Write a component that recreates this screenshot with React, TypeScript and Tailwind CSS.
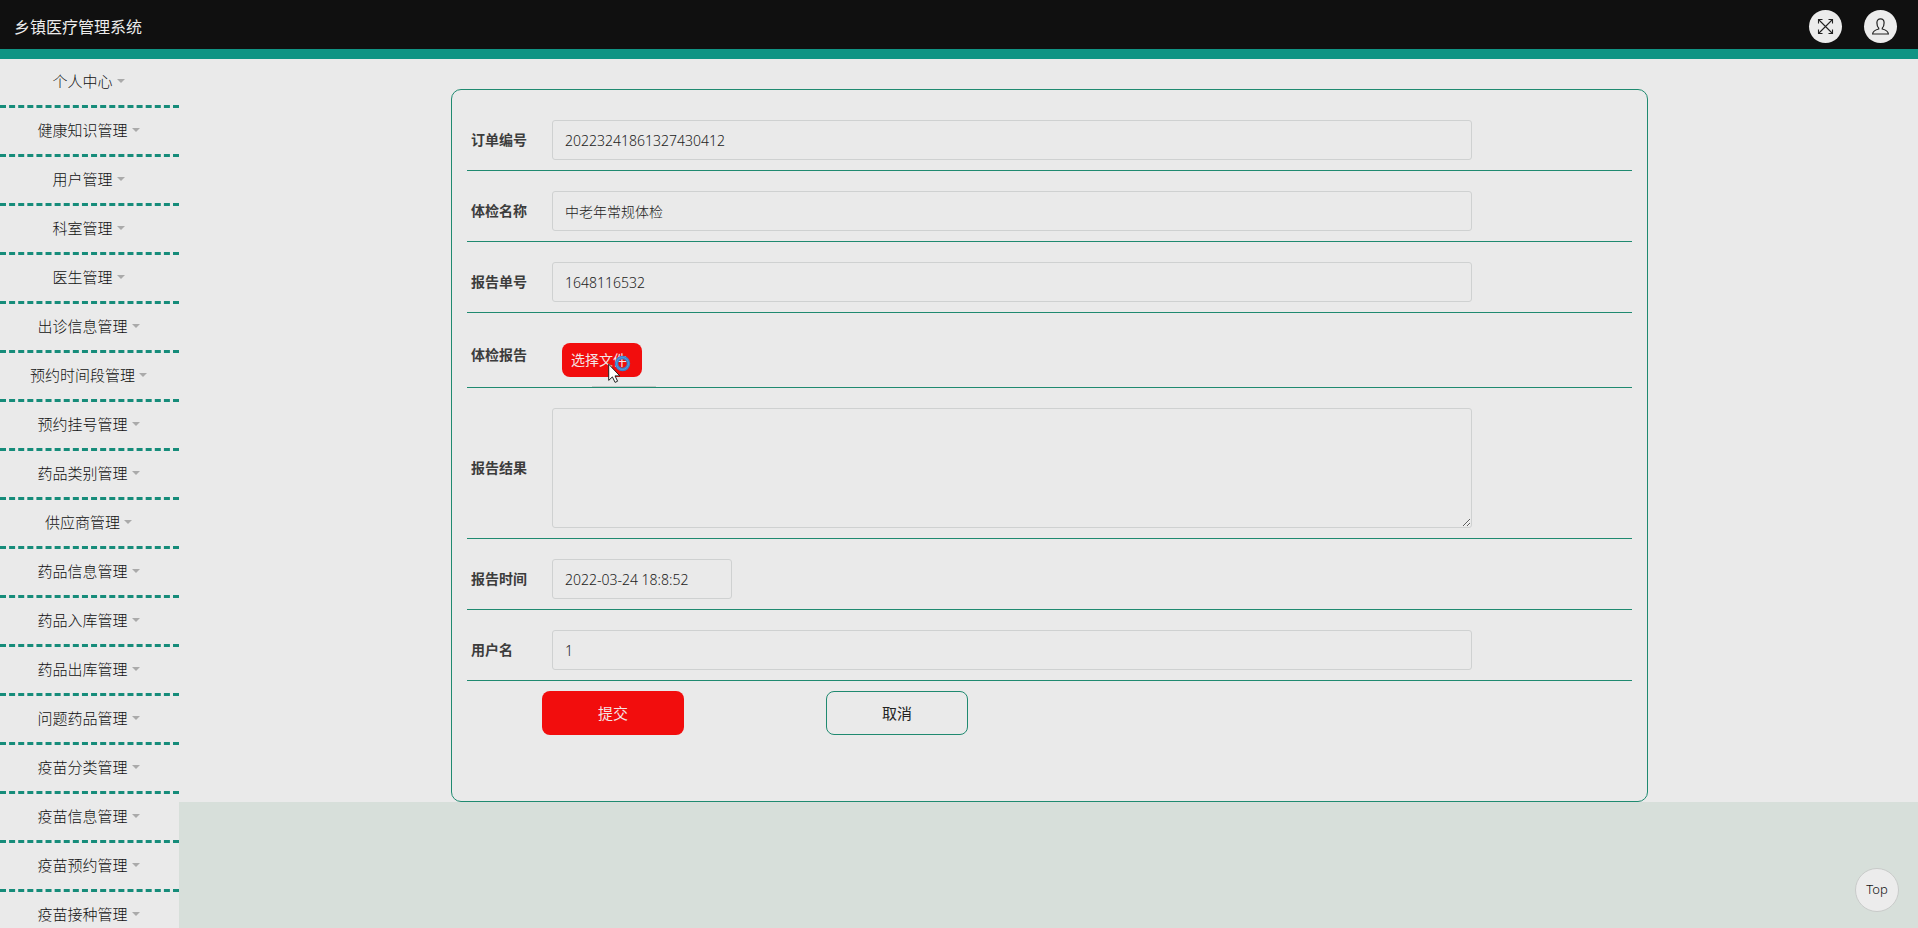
import { useState, type ReactNode } from "react";

const menus = [
  "个人中心",
  "健康知识管理",
  "用户管理",
  "科室管理",
  "医生管理",
  "出诊信息管理",
  "预约时间段管理",
  "预约挂号管理",
  "药品类别管理",
  "供应商管理",
  "药品信息管理",
  "药品入库管理",
  "药品出库管理",
  "问题药品管理",
  "疫苗分类管理",
  "疫苗信息管理",
  "疫苗预约管理",
  "疫苗接种管理",
];

const inputClass =
  "h-10 rounded-[3px] border border-[#cfd1d1] bg-transparent px-3 text-sm font-light text-[#222] outline-none";

function Row({ id, label, children }: { id: string; label: string; children: ReactNode }) {
  return (
    <div className="flex items-center border-b border-[#1f8a70] pt-5 pb-2.5 pl-1">
      <label htmlFor={id} className="mr-px w-20 shrink-0 text-sm font-bold text-[#3c3c3c]">
        {label}
      </label>
      {children}
    </div>
  );
}

function FullscreenIcon() {
  return (
    <svg width="17" height="17" viewBox="0 0 17 17" fill="none" stroke="#222" strokeWidth="1.1">
      <path d="M1.5 1.5l14 14M15.5 1.5l-14 14" />
      <path d="M1.5 5.5v-4h4M11.5 1.5h4v4M15.5 11.5v4h-4M5.5 15.5h-4v-4" />
    </svg>
  );
}

function UserIcon() {
  return (
    <svg width="17" height="17" viewBox="0 0 17 17" fill="none" stroke="#222" strokeWidth="1.2">
      <path d="M6.7 10.2C5.5 9 4.9 7 4.9 4.8 4.9 2.2 6.3.8 8.5.8s3.600 1.400 3.600 4c0 2.200-.6 4.200-1.800 5.400v.8c2.800.7 5.800 1.600 6.100 5H.6c.3-3.400 3.300-4.300 6.100-5z" />
    </svg>
  );
}

function BusyCursor() {
  return (
    <svg
      className="pointer-events-none absolute top-3 left-[46px]"
      width="24"
      height="28"
      viewBox="0 0 24 28"
    >
      <circle cx="14.5" cy="8.5" r="6" fill="none" stroke="#3a80cc" strokeWidth="3.4" />
      <circle cx="14.5" cy="8.5" r="6" fill="none" stroke="#5a9ddb" strokeWidth="1" />
      <path
        d="M.7 9.2v16.200l3.700-3.500 2.700 5.500 2.500-1.200-2.600-5.300h4.800z"
        fill="#fff"
        stroke="#222"
        strokeWidth="1"
      />
    </svg>
  );
}

export default function App() {
  const [form, setForm] = useState({
    orderNo: "20223241861327430412",
    name: "中老年常规体检",
    reportNo: "1648116532",
    result: "",
    time: "2022-03-24 18:8:52",
    username: "1",
  });

  const update = (key: keyof typeof form, value: string) =>
    setForm((prev) => ({ ...prev, [key]: value }));

  return (
    <div className="flex h-screen flex-col overflow-hidden bg-[#d7dfda] font-['Noto_Sans','Noto_Sans_CJK_SC',sans-serif]">
      <header className="flex h-[59px] shrink-0 items-center justify-between border-b-10 border-[#0f9484] bg-[#101010] pr-[21px] pl-3.5">
        <h1 className="pt-1 text-base text-[#ececec]">乡镇医疗管理系统</h1>
        <div className="flex gap-[22px] pt-[3px]">
          <button
            type="button"
            aria-label="全屏"
            className="flex h-[33px] w-[33px] items-center justify-center rounded-full bg-[#ececec]"
          >
            <FullscreenIcon />
          </button>
          <button
            type="button"
            aria-label="用户"
            className="flex h-[33px] w-[33px] items-center justify-center rounded-full bg-[#ececec]"
          >
            <UserIcon />
          </button>
        </div>
      </header>

      <div className="flex min-h-0 flex-1">
        <nav className="w-[179px] shrink-0 bg-[#eaeaea]">
          <ul>
            {menus.map((menu) => (
              <li key={menu} className="border-b-3 border-dashed border-[#168c7a]">
                <a
                  href="#"
                  className="flex h-[46px] items-center justify-center gap-1 pr-0.5 pb-px text-[15px] font-light text-[#111]"
                >
                  {menu}
                  <span className="mb-0.5 border-x-4 border-t-4 border-x-transparent border-t-[#aaa]" />
                </a>
              </li>
            ))}
          </ul>
        </nav>

        <main className="min-w-0 flex-1">
          <div className="bg-[#eaeaea] pt-[30px]">
            <form
              className="mr-[270px] ml-[272px] rounded-[10px] border border-[#1f8a70] px-[15px] pt-2.5 pb-[66px]"
              onSubmit={(e) => e.preventDefault()}
            >
              <Row id="orderNo" label="订单编号">
                <input
                  id="orderNo"
                  className={`${inputClass} w-[920px]`}
                  value={form.orderNo}
                  onChange={(e) => update("orderNo", e.target.value)}
                />
              </Row>
              <Row id="name" label="体检名称">
                <input
                  id="name"
                  className={`${inputClass} w-[920px]`}
                  value={form.name}
                  onChange={(e) => update("name", e.target.value)}
                />
              </Row>
              <Row id="reportNo" label="报告单号">
                <input
                  id="reportNo"
                  className={`${inputClass} w-[920px]`}
                  value={form.reportNo}
                  onChange={(e) => update("reportNo", e.target.value)}
                />
              </Row>
              <Row id="report" label="体检报告">
                <div className="relative mt-2.5 ml-2.5">
                  <button
                    id="report"
                    type="button"
                    className="block h-[34px] w-20 rounded-lg bg-[#f20d0d] px-[9px] text-left text-sm text-[#f3e6e6]"
                  >
                    选择文件
                  </button>
                  <BusyCursor />
                  <span className="absolute top-[43px] left-[30px] h-px w-16 bg-[#c4c8c6]" />
                </div>
              </Row>
              <Row id="result" label="报告结果">
                <textarea
                  id="result"
                  className="block h-[120px] w-[920px] rounded-[3px] border border-[#cfd1d1] bg-transparent px-3 py-2 text-sm font-light text-[#222] outline-none"
                  value={form.result}
                  onChange={(e) => update("result", e.target.value)}
                />
              </Row>
              <Row id="time" label="报告时间">
                <input
                  id="time"
                  className={`${inputClass} w-[180px]`}
                  value={form.time}
                  onChange={(e) => update("time", e.target.value)}
                />
              </Row>
              <Row id="username" label="用户名">
                <input
                  id="username"
                  className={`${inputClass} w-[920px]`}
                  value={form.username}
                  onChange={(e) => update("username", e.target.value)}
                />
              </Row>

              <div className="flex gap-[142px] pt-2.5 pl-[75px]">
                <button
                  type="submit"
                  className="h-11 w-[142px] rounded-lg bg-[#f20d0d] text-[15px] text-[#f3e6e6]"
                >
                  提交
                </button>
                <button
                  type="button"
                  className="h-11 w-[142px] rounded-lg border border-[#1f8a70] text-[15px] text-[#222]"
                >
                  取消
                </button>
              </div>
            </form>
          </div>
        </main>
      </div>

      <button
        type="button"
        className="fixed right-[19px] bottom-4 h-11 w-11 rounded-full border border-[#c8cac9] bg-[#ececec] text-[13px] font-light text-[#111]"
      >
        Top
      </button>
    </div>
  );
}
